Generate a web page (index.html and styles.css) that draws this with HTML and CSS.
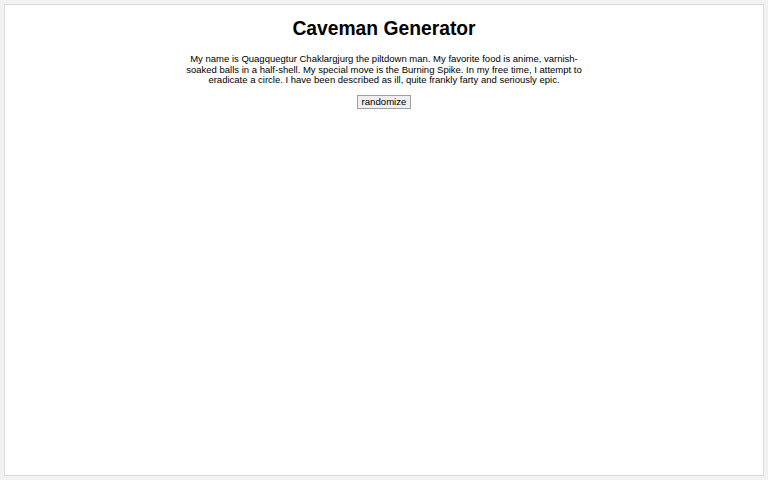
FILE: index.html
```html
<!DOCTYPE html>
<html>
<head>
<meta charset="utf-8">
<title>Caveman Generator</title>
<link rel="stylesheet" href="styles.css">
</head>
<body>
<main class="frame">
  <h1 class="title">Caveman Generator</h1>
  <p class="bio">My name is Quagquegtur Chaklargjurg the piltdown man. My favorite food is anime, varnish-soaked balls in a half-shell. My special move is the Burning Spike. In my free time, I attempt to eradicate a circle. I have been described as ill, quite frankly farty and seriously epic.</p>
  <button class="randomize" type="button">randomize</button>
</main>
</body>
</html>
```
FILE: styles.css
```css
html, body {
  margin: 0;
  height: 100%;
}

body {
  background: #f2f2f2;
  padding: 4px;
  box-sizing: border-box;
  font-family: "Liberation Sans", Arial, sans-serif;
  color: #000;
}

.frame {
  height: 100%;
  box-sizing: border-box;
  background: #fff;
  border: 1px solid #dcdcdc;
  display: flex;
  flex-direction: column;
  align-items: center;
  padding-top: 13px;
}

.title {
  margin: 0;
  font-size: 19.3px;
  font-weight: bold;
  line-height: 22px;
}

.bio {
  margin: 14px 0 0;
  width: 408px;
  font-size: 9.5px;
  line-height: 10.6px;
  text-align: center;
}

.randomize {
  margin-top: 9px;
  font-family: "Liberation Sans", Arial, sans-serif;
  font-size: 9.6px;
  line-height: 12px;
  padding: 0 4px;
  background: #efefef;
  border: 1px solid #a0a0a0;
  border-radius: 0;
  color: #000;
}
```
